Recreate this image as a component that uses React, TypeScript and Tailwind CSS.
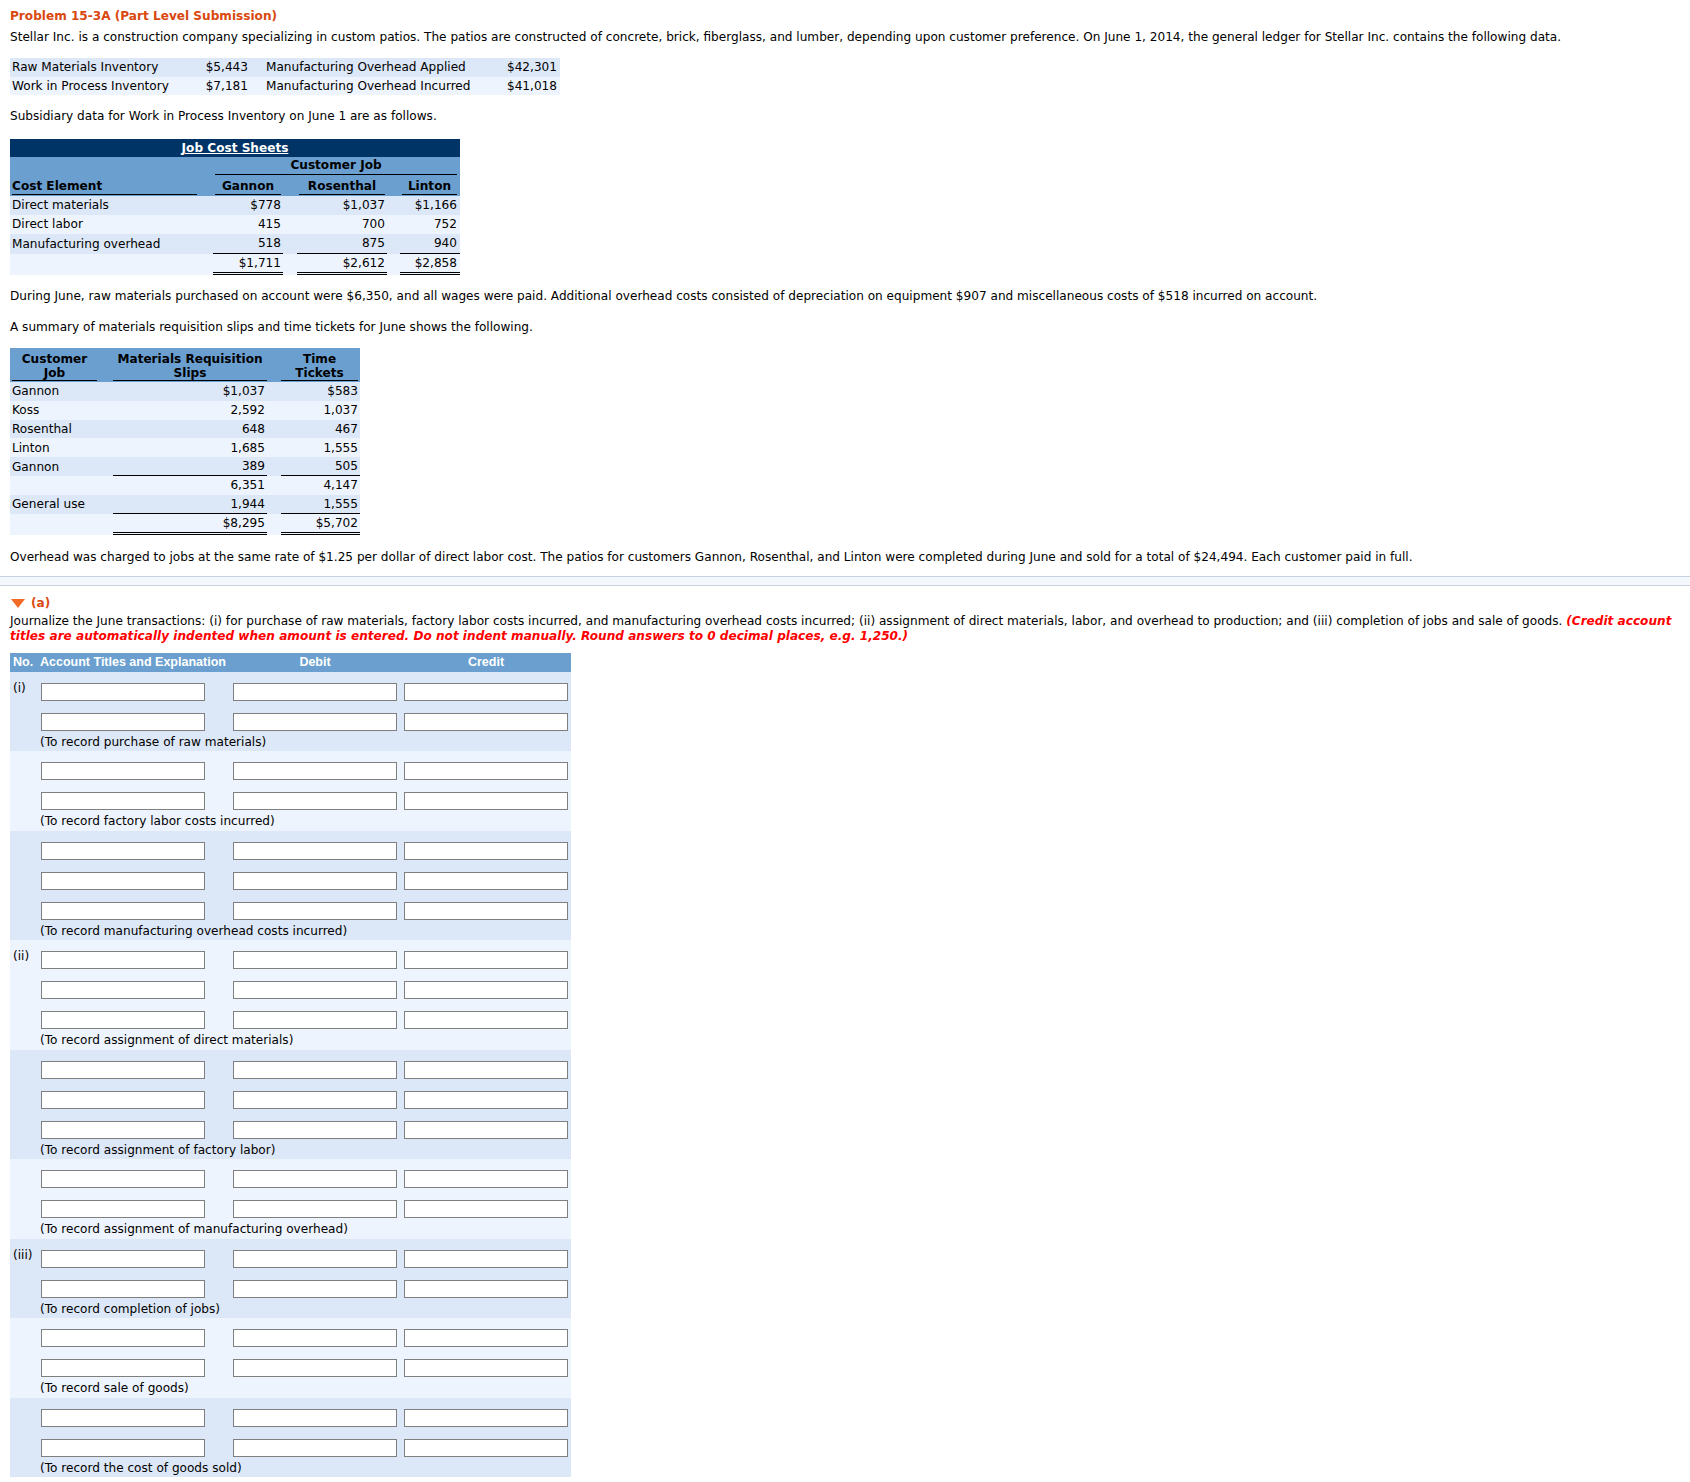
import React from "react";

const ledger = [
  ["Raw Materials Inventory", "$5,443", "Manufacturing Overhead Applied", "$42,301"],
  ["Work in Process Inventory", "$7,181", "Manufacturing Overhead Incurred", "$41,018"],
];

const jobRows = [
  { label: "Direct materials", g: "$778", r: "$1,037", l: "$1,166" },
  { label: "Direct labor", g: "415", r: "700", l: "752" },
  { label: "Manufacturing overhead", g: "518", r: "875", l: "940" },
];

const matRows = [
  { job: "Gannon", m: "$1,037", t: "$583", line: "" },
  { job: "Koss", m: "2,592", t: "1,037", line: "" },
  { job: "Rosenthal", m: "648", t: "467", line: "" },
  { job: "Linton", m: "1,685", t: "1,555", line: "" },
  { job: "Gannon", m: "389", t: "505", line: "single" },
  { job: "", m: "6,351", t: "4,147", line: "" },
  { job: "General use", m: "1,944", t: "1,555", line: "single" },
  { job: "", m: "$8,295", t: "$5,702", line: "double" },
];

const groups = [
  { no: "(i)", n: 2, caption: "(To record purchase of raw materials)" },
  { no: "", n: 2, caption: "(To record factory labor costs incurred)" },
  { no: "", n: 3, caption: "(To record manufacturing overhead costs incurred)" },
  { no: "(ii)", n: 3, caption: "(To record assignment of direct materials)" },
  { no: "", n: 3, caption: "(To record assignment of factory labor)" },
  { no: "", n: 2, caption: "(To record assignment of manufacturing overhead)" },
  { no: "(iii)", n: 2, caption: "(To record completion of jobs)" },
  { no: "", n: 2, caption: "(To record sale of goods)" },
  { no: "", n: 2, caption: "(To record the cost of goods sold)" },
];

const Box = () => (
  <input
    type="text"
    className="h-[18px] w-[164px] border border-[#7f7f7f] bg-white outline-none"
  />
);

const LedgerTable = () => (
  <div className="mt-[12px] w-[550px]">
    {ledger.map((row, i) => (
      <div
        key={i}
        className={`flex h-[18.5px] items-center ${i % 2 === 0 ? "bg-[#dce7f7]" : "bg-[#eef4fd]"}`}
      >
        <div className="w-[178px] pl-[2px]">{row[0]}</div>
        <div className="w-[62px] pr-[2px] text-right">{row[1]}</div>
        <div className="w-[230px] pl-[16px]">{row[2]}</div>
        <div className="w-[80px] pr-[3px] text-right">{row[3]}</div>
      </div>
    ))}
  </div>
);

const JobCostTable = () => (
  <div className="mt-[14px] w-[450px]">
    <div className="flex h-[18px] items-center justify-center bg-[#003366] font-bold text-white underline">
      Job Cost Sheets
    </div>
    <div className="flex h-[18px] bg-[#6a9fcf] font-bold">
      <div className="w-[189px]" />
      <div className="flex flex-1 pl-[16px] pr-[3px]">
        <div className="flex-1 border-b border-black text-center leading-[17px]">Customer Job</div>
      </div>
    </div>
    <div className="flex h-[21px] items-end bg-[#6a9fcf] pb-[1px] font-bold">
      <div className="w-[189px] px-[2px]">
        <div className="border-b border-black leading-[16px]">Cost Element</div>
      </div>
      <div className="w-[84px] pl-[16px] pr-[2px]">
        <div className="border-b border-black text-center leading-[16px]">Gannon</div>
      </div>
      <div className="w-[104px] pl-[16px] pr-[2px]">
        <div className="border-b border-black text-center leading-[16px]">Rosenthal</div>
      </div>
      <div className="w-[73px] pl-[15px] pr-[3px]">
        <div className="border-b border-black text-center leading-[16px]">Linton</div>
      </div>
    </div>
    {jobRows.map((r, i) => {
      const last = i === jobRows.length - 1;
      const line = last ? "border-b border-black" : "";
      return (
        <div
          key={r.label}
          className={`flex ${last ? "h-[20px]" : "h-[19px]"} items-stretch ${i % 2 === 0 ? "bg-[#dce7f7]" : "bg-[#eef4fd]"}`}
        >
          <div className="flex w-[189px] items-center px-[2px]">{r.label}</div>
          <div className="w-[84px] pl-[14px]">
            <div className={`flex h-full items-center justify-end pr-[2px] ${line}`}>{r.g}</div>
          </div>
          <div className="w-[104px] pl-[14px]">
            <div className={`flex h-full items-center justify-end pr-[2px] ${line}`}>{r.r}</div>
          </div>
          <div className="w-[73px] pl-[13px]">
            <div className={`flex h-full items-center justify-end pr-[3px] ${line}`}>{r.l}</div>
          </div>
        </div>
      );
    })}
    <div className="flex h-[21px] items-stretch bg-[#eef4fd]">
      <div className="w-[189px]" />
      <div className="w-[84px] pl-[14px]">
        <div className="flex h-full items-center justify-end border-b-[3px] border-double border-black pr-[2px]">$1,711</div>
      </div>
      <div className="w-[104px] pl-[14px]">
        <div className="flex h-full items-center justify-end border-b-[3px] border-double border-black pr-[2px]">$2,612</div>
      </div>
      <div className="w-[73px] pl-[13px]">
        <div className="flex h-full items-center justify-end border-b-[3px] border-double border-black pr-[3px]">$2,858</div>
      </div>
    </div>
  </div>
);

const MaterialsTable = () => (
  <div className="mt-[12px] w-[350px]">
    <div className="flex h-[34px] items-end bg-[#6a9fcf] pb-[1px] font-bold leading-[14px]">
      <div className="w-[95px] pl-[2px] pr-[8px]">
        <div className="border-b border-black text-center">
          Customer
          <br />
          Job
        </div>
      </div>
      <div className="w-[162px] pl-[8px]">
        <div className="border-b border-black text-center">
          Materials Requisition
          <br />
          Slips
        </div>
      </div>
      <div className="w-[93px] pl-[14px] pr-[2px]">
        <div className="border-b border-black text-center">
          Time
          <br />
          Tickets
        </div>
      </div>
    </div>
    {matRows.map((r, i) => {
      const line =
        r.line === "single"
          ? "border-b border-black"
          : r.line === "double"
            ? "border-b-[3px] border-double border-black"
            : "";
      return (
        <div
          key={i}
          className={`flex ${r.line === "double" ? "h-[21px]" : "h-[18.8px]"} items-stretch ${i % 2 === 0 ? "bg-[#dce7f7]" : "bg-[#eef4fd]"}`}
        >
          <div className="flex w-[95px] items-center pl-[2px]">{r.job}</div>
          <div className="w-[162px] pl-[8px]">
            <div className={`flex h-full items-center justify-end pr-[2px] ${line}`}>{r.m}</div>
          </div>
          <div className="w-[93px] pl-[14px]">
            <div className={`flex h-full items-center justify-end pr-[2px] ${line}`}>{r.t}</div>
          </div>
        </div>
      );
    })}
  </div>
);

const JournalTable = () => (
  <div className="mt-[9px] w-[561px]">
    <div className="flex h-[19px] items-center bg-[#6a9fcf] font-['Liberation_Sans',Arial,sans-serif] text-[12.5px] font-bold text-white">
      <div className="w-[30px] pl-[3px]">No.</div>
      <div className="w-[193px]">Account Titles and Explanation</div>
      <div className="w-[164px] text-center">Debit</div>
      <div className="w-[7px]" />
      <div className="w-[164px] text-center">Credit</div>
    </div>
    {groups.map((g, gi) => (
      <div
        key={gi}
        className={`flex pt-[11px] ${gi % 2 === 0 ? "bg-[#dce7f7]" : "bg-[#eef4fd]"}`}
      >
        <div className="-mt-[2px] w-[31px] pl-[3px] leading-[14px]">{g.no}</div>
        <div className="flex flex-col">
          <div className="flex flex-col gap-[12px]">
            {Array.from({ length: g.n }).map((_, k) => (
              <div key={k} className="flex">
                <Box />
                <div className="w-[28px]" />
                <Box />
                <div className="w-[7px]" />
                <Box />
              </div>
            ))}
          </div>
          <div className="-ml-[1px] mt-[3px] h-[17.5px] leading-[17px]">{g.caption}</div>
        </div>
      </div>
    ))}
  </div>
);

export default function App() {
  return (
    <div className="min-h-[1482px] bg-white px-[10px] pb-[5px] pt-[7px] font-['DejaVu_Sans',Verdana,sans-serif] text-[12.1px] text-black">
      <div className="font-bold leading-[18px] text-[#d9480f]">Problem 15-3A (Part Level Submission)</div>
      <p className="mt-[3px] leading-[18px]">
        Stellar Inc. is a construction company specializing in custom patios. The patios are constructed of concrete,
        brick, fiberglass, and lumber, depending upon customer preference. On June 1, 2014, the general ledger for Stellar
        Inc. contains the following data.
      </p>

      <LedgerTable />

      <p className="mt-[12px] leading-[18px]">Subsidiary data for Work in Process Inventory on June 1 are as follows.</p>

      <JobCostTable />

      <p className="mt-[12px] leading-[18px]">
        During June, raw materials purchased on account were $6,350, and all wages were paid. Additional overhead costs
        consisted of depreciation on equipment $907 and miscellaneous costs of $518 incurred on account.
      </p>
      <p className="mt-[13px] leading-[18px]">
        A summary of materials requisition slips and time tickets for June shows the following.
      </p>

      <MaterialsTable />

      <p className="mt-[13px] leading-[18px]">
        Overhead was charged to jobs at the same rate of $1.25 per dollar of direct labor cost. The patios for customers
        Gannon, Rosenthal, and Linton were completed during June and sold for a total of $24,494. Each customer paid in
        full.
      </p>

      <div className="-mx-[10px] mt-[10px] h-[10px] border-y border-[#c7d2de] bg-[#f4f7fb]" />

      <div className="mt-[8px] flex h-[19px] items-center gap-[6px] font-bold text-[#d9480f]">
        <svg width="14" height="9" viewBox="0 0 14 9" className="ml-[1px]">
          <polygon points="0,0 14,0 7,9" fill="#f26a25" />
        </svg>
        <span>(a)</span>
      </div>
      <p className="mt-[1px] leading-[15px]">
        Journalize the June transactions: (i) for purchase of raw materials, factory labor costs incurred, and
        manufacturing overhead costs incurred; (ii) assignment of direct materials, labor, and overhead to production; and
        (iii) completion of jobs and sale of goods.{" "}
        <span className="font-bold italic text-[#ff0000]">
          (Credit account
          <br />
          titles are automatically indented when amount is entered. Do not indent manually. Round answers to 0 decimal
          places, e.g. 1,250.)
        </span>
      </p>

      <JournalTable />
    </div>
  );
}
